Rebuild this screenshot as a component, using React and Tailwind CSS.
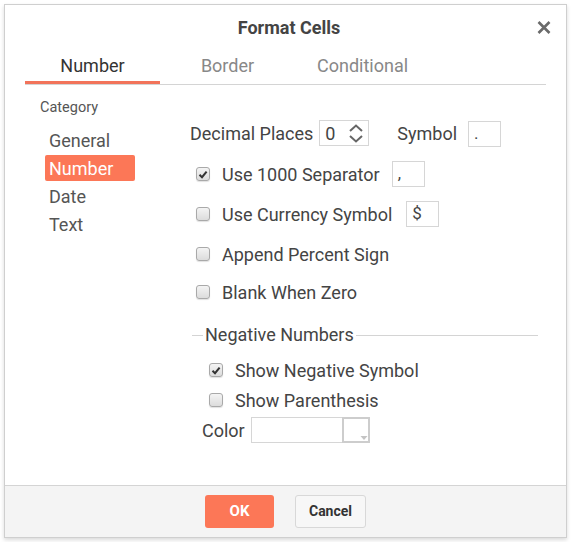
import { useState } from "react";

const ORANGE = "bg-[#fc7757]";

// casilla tipo nativo
const Check = ({ checked }) => (
  <span className="relative flex h-[14px] w-[14px] items-center justify-center rounded-[3px] border border-[#a9a9a9] bg-gradient-to-b from-[#f4f4f4] to-[#dcdcdc] shadow-[0_1px_1px_rgba(0,0,0,0.12)]">
    {checked && (
      <svg width="10" height="9" viewBox="0 0 10 9">
        <path d="M1.5 4.8 L4 7.2 L8.6 1.6" fill="none" stroke="#333" strokeWidth="2" />
      </svg>
    )}
  </span>
);

const CheckRow = ({ label, checked, children, className = "" }) => (
  <div className={"flex h-[26px] items-center " + className}>
    <Check checked={checked} />
    <span className="ml-[12px]">{label}</span>
    {children}
  </div>
);

const SmallInput = ({ value, className = "" }) => (
  <div className={"flex h-[26px] w-[33px] items-center border border-[#d6d6d6] bg-white pl-[5px] text-[17px] " + className}>
    {value}
  </div>
);

const App = () => {
  const [tab] = useState("Number");
  const [category] = useState("Number");

  const tabs = ["Number", "Border", "Conditional"];
  const categories = ["General", "Number", "Date", "Text"];

  return (
    <div
      className="h-[542px] w-[573px] overflow-hidden bg-white pl-[4px] pt-[4px] text-[#444]"
      style={{ fontFamily: "Roboto, 'Liberation Sans', sans-serif" }}
    >
      <div className="flex h-[534px] w-[563px] flex-col border border-[#cfcfcf] bg-white shadow-[0_2px_4px_rgba(0,0,0,0.15)]">
        {/* cabecera */}
        <div className="relative h-[47px] pl-[7px] pt-[13px] text-center text-[18px] font-bold leading-[20px] text-[#444]">
          Format Cells
          <svg
            className="absolute right-[15px] top-[16px]"
            width="14"
            height="13"
            viewBox="0 0 14 13"
          >
            <path d="M1.5 1 L12.5 12 M12.5 1 L1.5 12" stroke="#6a6a6a" strokeWidth="2.6" />
          </svg>
        </div>

        {/* pestañas */}
        <div className="mx-[20px] flex border-b border-[#d4d4d4]">
          {tabs.map(t => (
            <div
              key={t}
              className={
                "w-[135px] pb-[4px] pt-[3px] text-center text-[18px] leading-[22px] " +
                (t === tab
                  ? "border-b-[3px] border-[#f2735a] text-[#333]"
                  : "border-b-[3px] border-transparent text-[#888]")
              }
            >
              {t}
            </div>
          ))}
        </div>

        {/* cuerpo */}
        <div className="flex flex-1">
          <div className="w-[185px] pl-[35px] pt-[14px]">
            <div className="text-[14.5px] leading-[17px] text-[#555]">Category</div>
            <div className="ml-[5px] mt-[11px] flex flex-col gap-[2px]">
              {categories.map(c => (
                <div
                  key={c}
                  className={
                    "flex h-[26px] w-[90px] items-center rounded-[2px] pl-[4px] text-[18px] " +
                    (c === category ? ORANGE + " text-white" : "text-[#555]")
                  }
                >
                  {c}
                </div>
              ))}
            </div>
          </div>

          <div className="flex-1 text-[18px]">
            {/* decimales */}
            <div className="mt-[35px] flex h-[26px] items-center">
              <span>Decimal Places</span>
              <div className="ml-[6px] flex h-[26px] w-[50px] items-center justify-between border border-[#d6d6d6] pl-[5px] pr-[4px]">
                <span>0</span>
                <svg width="16" height="21" viewBox="0 0 16 21">
                  <path d="M2 8 L8 2.5 L14 8" fill="none" stroke="#666" strokeWidth="2" />
                  <path d="M2 13 L8 18.5 L14 13" fill="none" stroke="#666" strokeWidth="2" />
                </svg>
              </div>
              <span className="ml-[28px]">Symbol</span>
              <SmallInput value="." className="ml-[11px] translate-y-[1px]" />
            </div>

            <div className="pl-[6px]">
              <CheckRow label="Use 1000 Separator" checked className="mt-[15px]">
                <SmallInput value="," className="ml-[12px]" />
              </CheckRow>
              <CheckRow label="Use Currency Symbol" className="mt-[14px]">
                <SmallInput value="$" className="ml-[14px]" />
              </CheckRow>
              <CheckRow label="Append Percent Sign" className="mt-[14px]" />
              <CheckRow label="Blank When Zero" className="mt-[12px]" />
            </div>

            {/* numeros negativos */}
            <div className="mt-[20px] flex h-[20px] w-[348px] items-center pl-[2px]">
              <span className="h-px w-[11px] bg-[#d4d4d4]" />
              <span className="px-[2px] leading-[20px]">Negative Numbers</span>
              <span className="h-px flex-1 bg-[#d4d4d4]" />
            </div>

            <div className="pl-[19px]">
              <CheckRow label="Show Negative Symbol" checked className="mt-[12px]" />
              <CheckRow label="Show Parenthesis" className="mt-[4px]" />
            </div>

            <div className="ml-[12px] mt-[4px] flex h-[26px] items-center">
              <span>Color</span>
              <div className="ml-[6px] flex h-[26px] w-[119px] border border-[#d6d6d6] bg-white">
                <div className="flex-1" />
                <div className="relative -my-px -mr-px h-[26px] w-[28px] border-2 border-[#cdcdcd] bg-white">
                  <svg className="absolute bottom-0 right-0" width="8" height="6" viewBox="0 0 8 6">
                    <path d="M0.5 1 L7.5 1 L4 5 Z" fill="#c4c4c4" />
                  </svg>
                </div>
              </div>
            </div>
          </div>
        </div>

        {/* pie */}
        <div className="flex h-[52px] justify-center gap-[21px] border-t border-[#d4d4d4] bg-[#f4f4f4] pt-[9px]">
          <button className={"h-[33px] w-[69px] rounded-[3px] text-[15px] font-bold text-white " + ORANGE}>
            OK
          </button>
          <button className="h-[33px] w-[71px] rounded-[3px] border border-[#d8d8d8] bg-[#f7f7f7] text-[14px] font-bold text-[#333]">
            Cancel
          </button>
        </div>
      </div>
    </div>
  );
};

export default App;
